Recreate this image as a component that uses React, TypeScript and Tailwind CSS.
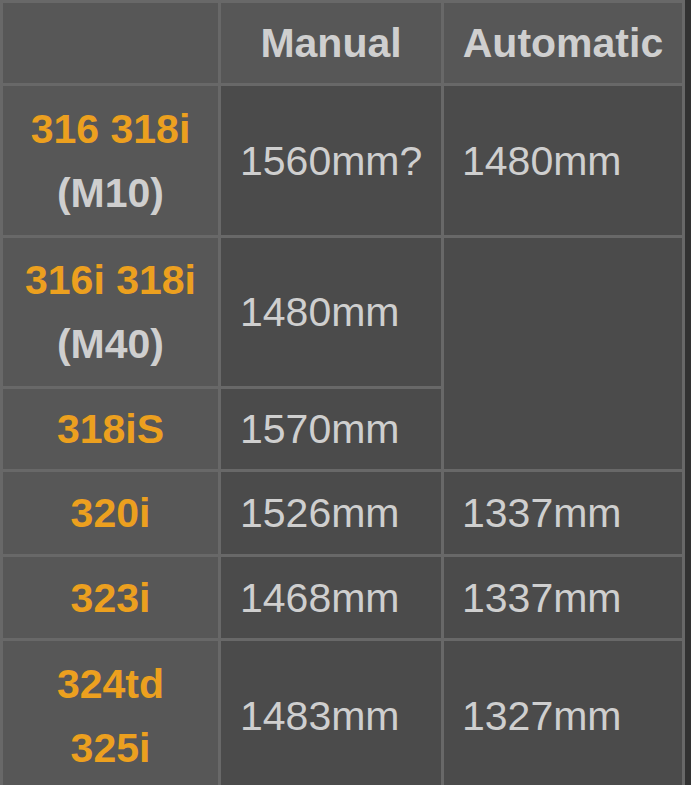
type Row = {
  model: string[];
  manual?: string;
  automatic?: string;
  autoSpan?: number;
  skipAuto?: boolean;
  height: string;
};

const rows: Row[] = [
  { model: ["316 318i", "(M10)"], manual: "1560mm?", automatic: "1480mm", height: "h-[149px]" },
  { model: ["316i 318i", "(M40)"], manual: "1480mm", automatic: "", autoSpan: 2, height: "h-[148px]" },
  { model: ["318iS"], manual: "1570mm", skipAuto: true, height: "h-[80px]" },
  { model: ["320i"], manual: "1526mm", automatic: "1337mm", height: "h-[82px]" },
  { model: ["323i"], manual: "1468mm", automatic: "1337mm", height: "h-[81px]" },
  { model: ["324td", "325i"], manual: "1483mm", automatic: "1327mm", height: "h-[150px]" },
];

function ModelName({ lines }: { lines: string[] }) {
  return (
    <>
      {lines.map((line) => (
        <div
          key={line}
          className={line.startsWith("(") ? "text-[#cfcfcf]" : "text-[#eca01f]"}
        >
          {line}
        </div>
      ))}
    </>
  );
}

export default function App() {
  return (
    <div className="min-h-screen bg-[#323232] overflow-hidden font-['Liberation_Sans',Arial,sans-serif]">
      <table className="border-separate border-spacing-[3px] bg-[#686868] font-['Liberation_Sans',Arial,sans-serif] text-[41px] leading-[64px] text-[#cfcfcf]">
        <thead>
          <tr className="h-[80px] font-bold">
            <th className="w-[215px] bg-[#575757] p-0"></th>
            <th className="w-[220px] bg-[#575757] p-0 text-center">Manual</th>
            <th className="w-[238px] bg-[#575757] p-0 text-center">Automatic</th>
          </tr>
        </thead>
        <tbody>
          {rows.map((row) => (
            <tr key={row.model.join(" ")} className={row.height}>
              {/* Model column */}
              <td className="bg-[#575757] px-0 py-0 text-center font-bold align-middle">
                <ModelName lines={row.model} />
              </td>
              <td className="bg-[#4b4b4b] pl-[19px] pr-0 py-0 align-middle whitespace-nowrap">
                {row.manual}
              </td>
              {!row.skipAuto && (
                <td
                  rowSpan={row.autoSpan ?? 1}
                  className="bg-[#4b4b4b] pl-[18px] pr-0 py-0 align-middle whitespace-nowrap"
                >
                  {row.automatic}
                </td>
              )}
            </tr>
          ))}
        </tbody>
      </table>
    </div>
  );
}
